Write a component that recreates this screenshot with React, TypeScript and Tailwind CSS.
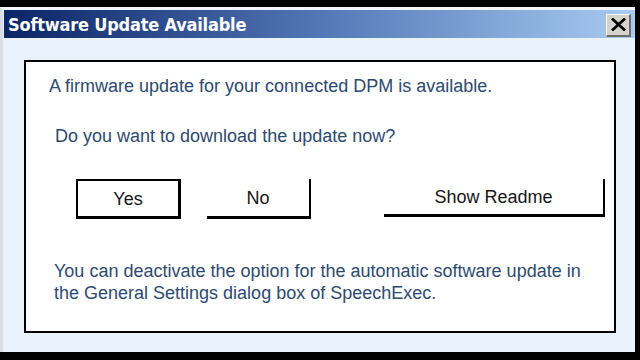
import React from 'react';

const CloseButton = () => (
    <div className="w-[25px] h-[23px] mt-[2px] bg-[#d6d3cc] border-t border-l border-t-[#f8f8f6] border-l-[#f8f8f6] border-b-2 border-r-2 border-b-[#6f6d68] border-r-[#6f6d68] flex items-center justify-center">
        <svg width="15" height="13" viewBox="0 0 15 13">
            <path d="M2 1.5 L13 11.5 M13 1.5 L2 11.5" stroke="#000" strokeWidth="2.8" strokeLinecap="square" />
        </svg>
    </div>
);

const App = () => {
    return (
        <div className="w-[640px] h-[360px] bg-black pt-[7px] pb-[8px] pr-[5px] flex font-['Liberation_Sans',Arial,sans-serif]">
            <div className="flex-1 flex flex-col bg-[#e9f1fb] border-l-[3px] border-l-[#d9dde3] border-t-[3px] border-t-[#f2f5f9]">
                {/* Title bar */}
                <div className="h-[28px] ml-[1px] flex items-center justify-between pl-[4px] pr-[4px] bg-gradient-to-r from-[#0c2466] via-[#5377b6] to-[#a9ccf1]">
                    <span className="text-white font-bold text-[18px] tracking-[-0.2px] font-['DejaVu_Sans_Condensed','DejaVu_Sans',Verdana,sans-serif]">
                        Software Update Available
                    </span>
                    <CloseButton />
                </div>

                {/* Body */}
                <div className="flex-1 flex flex-col pl-[21px] pr-[19px] pt-[22px] pb-[19px]">
                    <div className="flex-1 flex flex-col bg-white border-2 border-black pl-[23px] pt-[13px] text-[18px] leading-[22px] text-[#2d4a70]">
                        <p>A firmware update for your connected DPM is available.</p>
                        <p className="mt-[28px] ml-[6px]">Do you want to download the update now?</p>

                        <div className="flex mt-[32px] ml-[27px] text-[#161616]">
                            <button className="w-[105px] h-[40px] border-2 border-black border-r-[3px] border-b-[3px] bg-white">
                                Yes
                            </button>
                            <button className="w-[104px] h-[40px] ml-[26px] border-r-2 border-b-[3px] border-black bg-white">
                                No
                            </button>
                            <button className="w-[221px] h-[38px] ml-[73px] border-r-2 border-b-[3px] border-black bg-white">
                                Show Readme
                            </button>
                        </div>

                        <p className="mt-[41px] ml-[5px]">
                            You can deactivate the option for the automatic software update in
                            <br />
                            the General Settings dialog box of SpeechExec.
                        </p>
                    </div>
                </div>
            </div>
        </div>
    );
};

export default App;
